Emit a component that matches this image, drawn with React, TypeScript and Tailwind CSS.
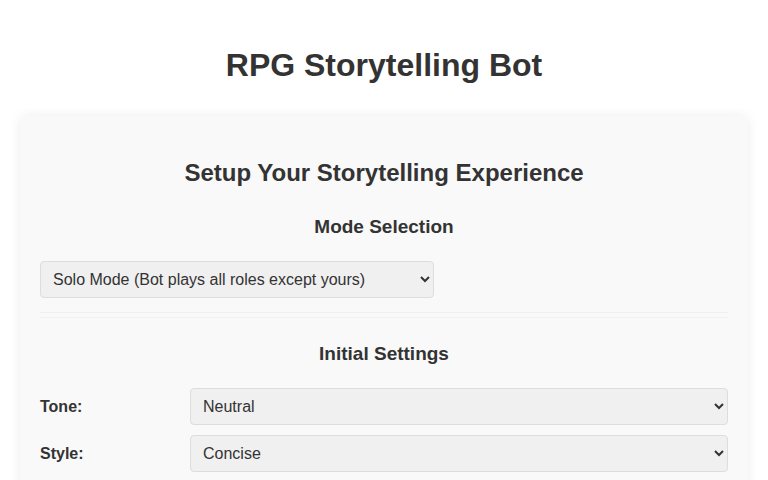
export default function App() {
  return (
    <div className="min-h-screen bg-white text-[#333] font-['Liberation_Sans',Arial,sans-serif]">
      <h1 className="pt-[47px] text-center text-[32px] font-bold leading-[37px]">RPG Storytelling Bot</h1>
      <div className="mx-5 mt-[32px] rounded-lg bg-[#f9f9f9] px-5 pt-[43px] pb-5 shadow-[0_0_12px_rgba(0,0,0,0.08)]">
        <h2 className="text-center text-2xl font-bold leading-[28px]">Setup Your Storytelling Experience</h2>
        <div className="mt-[29px] border-b border-[#efefef] pb-[14px]">
          <h3 className="text-center text-[19px] font-bold leading-[22px]">Mode Selection</h3>
          <select className="mt-[23px] h-[37px] w-[394px] rounded border border-[#ddd] bg-[#f0f0f0] pl-2 pr-2 text-base text-[#333]">
            <option>Solo Mode (Bot plays all roles except yours)</option>
          </select>
        </div>
        <div className="mt-1 border-t border-[#f1f1f1] pt-[25px]">
          <h3 className="text-center text-[19px] font-bold leading-[22px]">Initial Settings</h3>
          <div className="mt-[23px] flex flex-col gap-[10px]">
            <div className="flex items-center">
              <label className="w-[150px] text-base font-bold">Tone:</label>
              <select className="h-[37px] flex-1 rounded border border-[#ddd] bg-[#f0f0f0] pl-2 pr-2 text-base text-[#333]">
                <option>Neutral</option>
              </select>
            </div>
            <div className="flex items-center">
              <label className="w-[150px] text-base font-bold">Style:</label>
              <select className="h-[37px] flex-1 rounded border border-[#ddd] bg-[#f0f0f0] pl-2 pr-2 text-base text-[#333]">
                <option>Concise</option>
              </select>
            </div>
          </div>
        </div>
      </div>
    </div>
  );
}
